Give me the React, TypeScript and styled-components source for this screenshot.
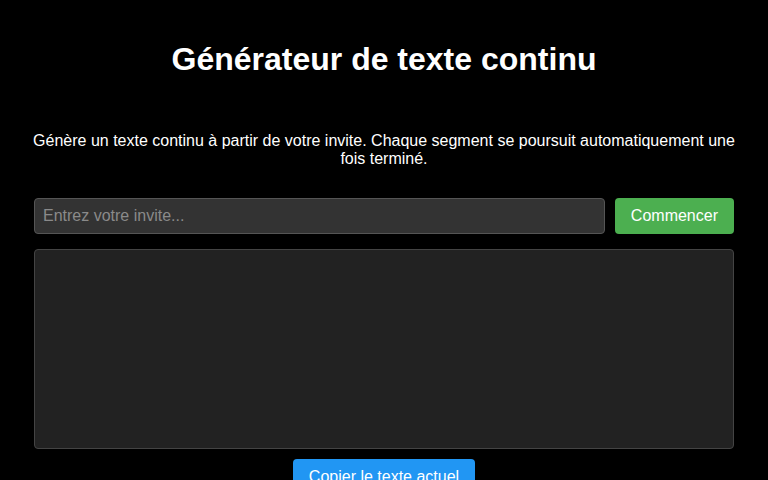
import styled, { createGlobalStyle } from 'styled-components';

const GlobalStyle = createGlobalStyle`
  html, body {
    margin: 0;
    background: #000000;
    color: #ffffff;
    font-family: 'Liberation Sans', Arial, sans-serif;
  }
`;

const Container = styled.div`
  max-width: 700px;
  margin: 0 auto;
  padding: 20px;
  display: flex;
  flex-direction: column;
  align-items: center;
`;

const Title = styled.h1`
  font-size: 32px;
  font-weight: 700;
  margin: 21px 0 54px;
  text-align: center;
`;

const Intro = styled.p`
  font-size: 16px;
  margin: 0 -6px 30px;
  text-align: center;
  line-height: 18px;
`;

const PromptRow = styled.div`
  width: 100%;
  display: flex;
  gap: 10px;
`;

const PromptInput = styled.input`
  flex: 1;
  height: 36px;
  box-sizing: border-box;
  padding: 8px;
  font-family: inherit;
  font-size: 16px;
  background: #333333;
  color: #ffffff;
  border: 1px solid #555555;
  border-radius: 4px;

  &::placeholder {
    color: #8a8a8a;
  }
`;

const Button = styled.button<{ $color: string }>`
  height: 36px;
  padding: 8px 16px;
  font-family: inherit;
  font-size: 16px;
  color: #ffffff;
  background: ${(p) => p.$color};
  border: none;
  border-radius: 4px;
  cursor: pointer;
`;

const Output = styled.div`
  width: 100%;
  box-sizing: border-box;
  height: 200px;
  margin-top: 15px;
  background: #222222;
  border: 1px solid #444444;
  border-radius: 4px;
`;

const CopyButton = styled(Button)`
  margin-top: 10px;
`;

export default function App() {
  return (
    <>
      <GlobalStyle />
      <Container>
        <Title>Générateur de texte continu</Title>
        <Intro>
          Génère un texte continu à partir de votre invite. Chaque segment se
          poursuit automatiquement une fois terminé.
        </Intro>
        <PromptRow>
          <PromptInput placeholder="Entrez votre invite..." />
          <Button $color="#4caf50">Commencer</Button>
        </PromptRow>
        <Output />
        <CopyButton $color="#2196f3">Copier le texte actuel</CopyButton>
      </Container>
    </>
  );
}
